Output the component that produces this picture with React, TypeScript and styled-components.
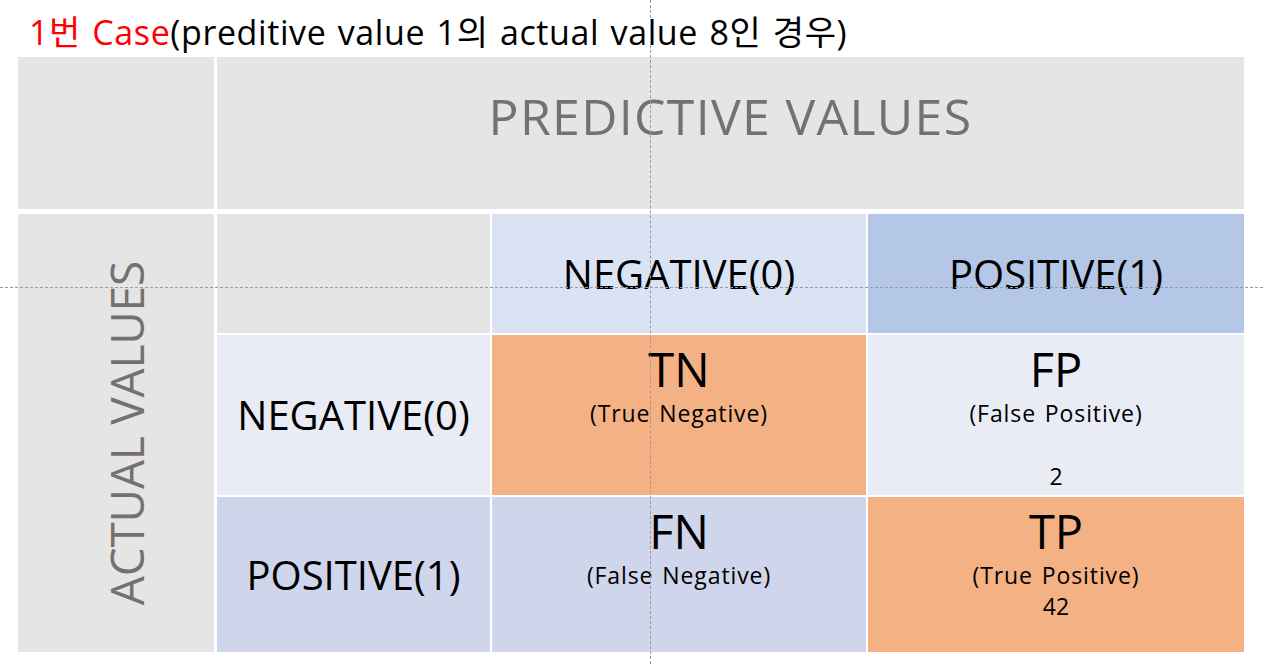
import * as React from 'react';
import styled, { createGlobalStyle } from 'styled-components';

const GlobalStyle = createGlobalStyle`
  html, body {
    margin: 0;
    padding: 0;
    background: #ffffff;
  }
  body {
    font-family: "Open Sans", "Noto Sans CJK KR", sans-serif;
    color: #000000;
  }
`;

const Slide = styled.div`
  position: relative;
  width: 1263px;
  height: 664px;
  overflow: hidden;
  background: #ffffff;
`;

const Title = styled.div`
  height: 57px;
  padding-left: 29px;
  box-sizing: border-box;
  font-size: 34px;
  line-height: 64px;
  white-space: nowrap;
  letter-spacing: 0.6px;
  word-spacing: 2px;
`;

const Red = styled.span`
  color: #ff0000;
`;

const Board = styled.div`
  margin-left: 18px;
  width: 1226px;
  display: flex;
  flex-direction: column;
  gap: 5px;
`;

const Band = styled.div<{ h: number }>`
  display: flex;
  gap: 3px;
  height: ${({ h }) => h}px;
`;

const GrayBlock = styled.div`
  width: 196px;
  flex-shrink: 0;
  background: #e5e5e5;
`;

const HeaderCell = styled.div`
  flex: 1;
  background: #e5e5e5;
  display: flex;
  justify-content: center;
  padding-top: 25px;
  box-sizing: border-box;
  font-size: 50px;
  line-height: 68px;
  color: #767171;
  letter-spacing: 1.3px;
`;

const SideCell = styled(GrayBlock)`
  display: flex;
  align-items: center;
  justify-content: center;
  padding-left: 20px;
  box-sizing: border-box;
`;

const SideText = styled.div`
  writing-mode: vertical-rl;
  transform: rotate(180deg);
  font-size: 46px;
  line-height: 46px;
  color: #767171;
  white-space: nowrap;
  letter-spacing: -0.2px;
`;

const Matrix = styled.div`
  flex: 1;
  display: grid;
  grid-template-columns: 273px 374px 376px;
  grid-template-rows: 119px 160px 155px;
  gap: 2px;
`;

const Cell = styled.div<{ bg: string; top?: boolean }>`
  background: ${({ bg }) => bg};
  display: flex;
  flex-direction: column;
  align-items: center;
  justify-content: ${({ top }) => (top ? 'flex-start' : 'center')};
  box-sizing: border-box;
  padding-top: ${({ top }) => (top ? '5px' : '0')};
`;

const Label = styled.div`
  font-size: 40px;
  line-height: 48px;
  white-space: nowrap;
`;

const Big = styled.div`
  font-size: 47px;
  line-height: 58px;
`;

const Sub = styled.div`
  font-size: 23px;
  line-height: 30px;
  letter-spacing: 0.9px;
  word-spacing: 2px;
`;

const Value = styled.div<{ gap: number }>`
  font-size: 23px;
  line-height: 28px;
  margin-top: ${({ gap }) => gap}px;
`;

const GuideV = styled.div`
  position: absolute;
  top: 0;
  bottom: 0;
  left: 650px;
  width: 0;
  border-left: 1px dashed #9a9a9a;
`;

const GuideH = styled.div`
  position: absolute;
  left: 0;
  right: 0;
  top: 287px;
  height: 0;
  border-top: 1px dashed #9a9a9a;
`;

const GRAY = '#e5e5e5';
const BLUE_LIGHT = '#dae3f3';
const BLUE_MID = '#b4c7e7';
const ROW_LIGHT = '#e9ebf5';
const ROW_DARK = '#cfd5ea';
const ORANGE = '#f4b183';

export default function App() {
  return (
    <Slide>
      <GlobalStyle />
      <Title>
        <Red>1번 Case</Red>(preditive value 1의 actual value 8인 경우)
      </Title>
      <Board>
        <Band h={152}>
          <GrayBlock />
          <HeaderCell>PREDICTIVE VALUES</HeaderCell>
        </Band>
        <Band h={438}>
          <SideCell>
            <SideText>ACTUAL VALUES</SideText>
          </SideCell>
          <Matrix>
            <Cell bg={GRAY} />
            <Cell bg={BLUE_LIGHT}>
              <Label>NEGATIVE(0)</Label>
            </Cell>
            <Cell bg={BLUE_MID}>
              <Label>POSITIVE(1)</Label>
            </Cell>

            <Cell bg={ROW_LIGHT}>
              <Label>NEGATIVE(0)</Label>
            </Cell>
            <Cell bg={ORANGE} top>
              <Big>TN</Big>
              <Sub>(True Negative)</Sub>
            </Cell>
            <Cell bg={ROW_LIGHT} top>
              <Big>FP</Big>
              <Sub>(False Positive)</Sub>
              <Value gap={34}>2</Value>
            </Cell>

            <Cell bg={ROW_DARK}>
              <Label>POSITIVE(1)</Label>
            </Cell>
            <Cell bg={ROW_DARK} top>
              <Big>FN</Big>
              <Sub>(False Negative)</Sub>
            </Cell>
            <Cell bg={ORANGE} top>
              <Big>TP</Big>
              <Sub>(True Positive)</Sub>
              <Value gap={2}>42</Value>
            </Cell>
          </Matrix>
        </Band>
      </Board>
      <GuideV />
      <GuideH />
    </Slide>
  );
}
